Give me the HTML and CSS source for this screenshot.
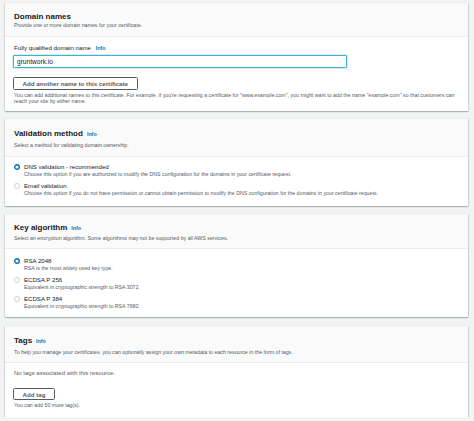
FILE: index.html
```
<!DOCTYPE html>
<html lang="en">
<head>
<meta charset="utf-8">
<title>Request certificate</title>
<link rel="stylesheet" href="styles.css">
</head>
<body>
<main class="stack">
  <section class="card card-1">
    <header class="card-header compact">
      <h2 class="card-title">Domain names</h2>
      <p class="card-desc">Provide one or more domain names for your certificate.</p>
    </header>
    <div class="card-body body-1">
      <div class="field-label">Fully qualified domain name <a class="info info-label">Info</a></div>
      <div class="input">gruntwork.io</div>
      <button class="btn btn-wide">Add another name to this certificate</button>
      <p class="help help-1">You can add additional names to this certificate. For example, if you're requesting a certificate for "www.example.com", you might want to add the name "example.com" so that customers can reach your site by either name.</p>
    </div>
  </section>

  <section class="card card-2">
    <header class="card-header h2">
      <h2 class="card-title">Validation method <a class="info">Info</a></h2>
      <p class="card-desc">Select a method for validating domain ownership.</p>
    </header>
    <div class="card-body radios body-2">
      <div class="radio-item">
        <svg class="radio" viewBox="0 0 12 12"><circle cx="6" cy="6" r="4.6" fill="#fff" stroke="#0073bb" stroke-width="2.8"/></svg>
        <div class="radio-label">DNS validation - recommended</div>
        <div class="radio-desc">Choose this option if you are authorized to modify the DNS configuration for the domains in your certificate request.</div>
      </div>
      <div class="radio-item">
        <svg class="radio" viewBox="0 0 12 12"><circle cx="6" cy="6" r="5.2" fill="#fff" stroke="#aab7b8" stroke-width="1.2"/></svg>
        <div class="radio-label">Email validation</div>
        <div class="radio-desc">Choose this option if you do not have permission or cannot obtain permission to modify the DNS configuration for the domains in your certificate request.</div>
      </div>
    </div>
  </section>

  <section class="card card-3">
    <header class="card-header h3">
      <h2 class="card-title">Key algorithm <a class="info">Info</a></h2>
      <p class="card-desc">Select an encryption algorithm. Some algorithms may not be supported by all AWS services.</p>
    </header>
    <div class="card-body radios body-3">
      <div class="radio-item">
        <svg class="radio" viewBox="0 0 12 12"><circle cx="6" cy="6" r="4.6" fill="#fff" stroke="#0073bb" stroke-width="2.8"/></svg>
        <div class="radio-label">RSA 2048</div>
        <div class="radio-desc">RSA is the most widely used key type.</div>
      </div>
      <div class="radio-item">
        <svg class="radio" viewBox="0 0 12 12"><circle cx="6" cy="6" r="5.2" fill="#fff" stroke="#aab7b8" stroke-width="1.2"/></svg>
        <div class="radio-label">ECDSA P 256</div>
        <div class="radio-desc">Equivalent in cryptographic strength to RSA 3072.</div>
      </div>
      <div class="radio-item">
        <svg class="radio" viewBox="0 0 12 12"><circle cx="6" cy="6" r="5.2" fill="#fff" stroke="#aab7b8" stroke-width="1.2"/></svg>
        <div class="radio-label">ECDSA P 384</div>
        <div class="radio-desc">Equivalent in cryptographic strength to RSA 7680.</div>
      </div>
    </div>
  </section>

  <section class="card card-4">
    <header class="card-header h4">
      <h2 class="card-title">Tags <a class="info">Info</a></h2>
      <p class="card-desc">To help you manage your certificates, you can optionally assign your own metadata to each resource in the form of tags.</p>
    </header>
    <div class="card-body body-4">
      <p class="empty">No tags associated with this resource.</p>
      <button class="btn btn-tag">Add tag</button>
      <p class="help help-4">You can add 50 more tag(s).</p>
    </div>
  </section>
</main>
</body>
</html>
```

FILE: styles.css
```
* { box-sizing: border-box; }
html, body { margin: 0; }
body {
  background: #f2f3f3;
  padding: 3px 6px 0 5px;
  font-family: "Liberation Sans", Arial, sans-serif;
  color: #16191f;
}
p, h2 { margin: 0; }

.stack {
  display: flex;
  flex-direction: column;
  gap: 8px;
}

.card {
  background: #ffffff;
  box-shadow: 0 1px 1px 0 rgba(0, 28, 36, 0.28), 1px 0 1px 0 rgba(0, 28, 36, 0.1), -1px 0 1px 0 rgba(0, 28, 36, 0.08);
}
.card-4 { margin-top: 1px; }

.card-header {
  background: #fafafa;
  border-bottom: 1px solid #eaeded;
  padding: 8px 9px 7px;
}
.card-header.compact { padding: 8px 9px 7px; }
.card-header.compact .card-title { line-height: 11px; }
.card-header.compact .card-desc { margin-top: 0; }
.card-header.h2 { padding: 9px 9px 7px; }
.card-header.h3 { padding: 7.5px 9px 6px; }
.card-header.h3 .card-desc { margin-top: 1.5px; }
.card-header.h4 { padding: 8.5px 9px 6px; }

.card-title {
  font-size: 8px;
  line-height: 12px;
  font-weight: 700;
  display: flex;
  align-items: baseline;
  gap: 4px;
}
.card-desc {
  font-size: 5.25px;
  line-height: 7px;
  color: #545b64;
  margin-top: 2px;
}

.info {
  font-size: 5.3px;
  font-weight: 700;
  color: #0073bb;
  text-decoration: none;
}
.info-label { margin-left: 3px; }

.card-body { padding: 7px 9px 7px; }
.body-1 { padding: 7px 9px 6.5px; }
.body-2 { padding: 6px 9px 9px; }
.body-3 { padding: 8px 9px 7px; }
.body-4 { padding: 6px 9px 7.5px; }

.field-label {
  font-size: 6.2px;
  line-height: 8px;
}
.input {
  margin-top: 3px;
  width: 334px;
  height: 13px;
  margin-left: -1px;
  border: 1px solid #3fb0cf;
  box-shadow: 0 0 0 0.5px rgba(0, 161, 201, 0.35);
  border-radius: 1px;
  padding: 0 3px;
  font-size: 6.6px;
  line-height: 11px;
}

.btn {
  display: block;
  height: 13px;
  border: 1px solid #545b64;
  border-radius: 1.5px;
  background: #ffffff;
  color: #545b64;
  font-family: inherit;
  font-size: 6.2px;
  font-weight: 700;
  padding: 0 8.5px;
  margin-left: -1px;
  line-height: 11px;
}
.btn-wide { margin-top: 9px; }
.btn-tag { margin-top: 11px; height: 12.5px; }

.help {
  font-size: 5.25px;
  line-height: 6.7px;
  color: #545b64;
}
.help-1 { margin-top: 1.5px; }
.help-4 { margin-top: 2px; line-height: 7px; }

.empty {
  font-size: 6px;
  line-height: 8px;
  color: #545b64;
}

.radios {
  display: flex;
  flex-direction: column;
  gap: 4px;
}
.radio-item {
  display: grid;
  grid-template-columns: 6px 1fr;
  column-gap: 4px;
  align-items: center;
}
.radio {
  grid-row: 1;
  grid-column: 1;
  width: 6px;
  height: 6px;
  display: block;
}
.radio-label {
  grid-row: 1;
  grid-column: 2;
  font-size: 6.1px;
  line-height: 8px;
}
.radio-desc {
  grid-row: 2;
  grid-column: 2;
  font-size: 5.25px;
  line-height: 7px;
  color: #545b64;
}
```
